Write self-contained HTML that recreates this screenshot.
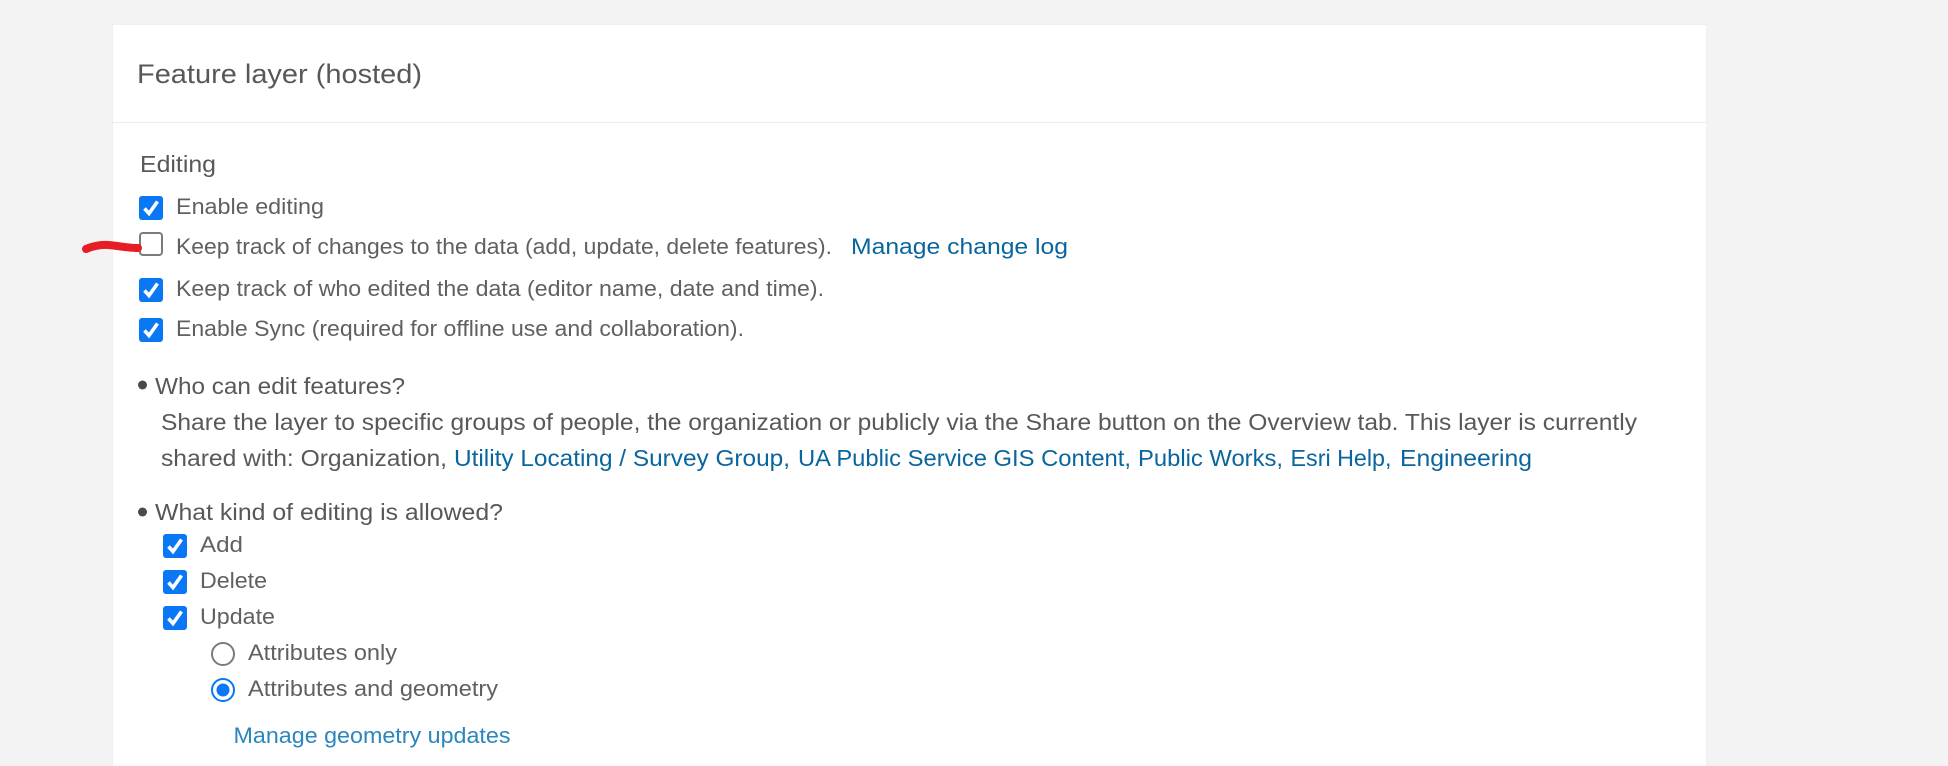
<!DOCTYPE html>
<html><head><meta charset="utf-8"><style>
html,body{margin:0;padding:0;width:1948px;height:766px;overflow:hidden;background:#f3f3f3}
svg{display:block}
text{font-family:"Liberation Sans",sans-serif;fill:#606060;font-size:22px}
.t{fill:#585858}
.l{fill:#0a659e}
.m{fill:#2a86bc}
</style></head><body>
<svg width="1948" height="766" viewBox="0 0 1948 766" xmlns="http://www.w3.org/2000/svg">
<defs>
<g id="cb"><rect width="24" height="24" rx="3" fill="#0a78f5"/><path d="M5.500 12.500l4.500 5L18.500 5.500" fill="none" stroke="#fff" stroke-width="3.600"/></g>
</defs>
<rect x="0" y="0" width="1948" height="766" fill="#f3f3f3"/>
<rect x="112.500" y="24.500" width="1594" height="742" fill="#fff" stroke="#efefef"/>
<rect x="113" y="122" width="1594" height="1" fill="#ececec"/>

<text x="137" y="83" style="font-size:27px" textLength="285" lengthAdjust="spacingAndGlyphs" class="t">Feature layer (hosted)</text>
<text x="140" y="172" style="font-size:23px" textLength="76" lengthAdjust="spacingAndGlyphs" class="t">Editing</text>

<use href="#cb" x="139" y="196"/>
<text x="176" y="214" textLength="148" lengthAdjust="spacingAndGlyphs">Enable editing</text>

<rect x="140" y="233" width="22" height="22" rx="3" fill="#fff" stroke="#7b7b7b" stroke-width="2"/>
<text x="176" y="254" textLength="656" lengthAdjust="spacingAndGlyphs">Keep track of changes to the data (add, update, delete features).</text>
<text x="851" y="254" textLength="217" lengthAdjust="spacingAndGlyphs" class="l">Manage change log</text>
<path d="M86 249C92 246.500 100 244.500 108 245C116 245.500 128 248 138 248" fill="none" stroke="#e81c24" stroke-width="8" stroke-linecap="round"/>

<use href="#cb" x="139" y="278"/>
<text x="176" y="296" textLength="648" lengthAdjust="spacingAndGlyphs">Keep track of who edited the data (editor name, date and time).</text>

<use href="#cb" x="139" y="318"/>
<text x="176" y="336" textLength="568" lengthAdjust="spacingAndGlyphs">Enable Sync (required for offline use and collaboration).</text>

<circle cx="142.500" cy="385" r="4.500" fill="#4a4a4a"/>
<text x="155" y="394" style="font-size:23px" textLength="250" lengthAdjust="spacingAndGlyphs" class="t">Who can edit features?</text>
<text x="161" y="430" style="font-size:23px" textLength="1476" lengthAdjust="spacingAndGlyphs" class="t">Share the layer to specific groups of people, the organization or publicly via the Share button on the Overview tab. This layer is currently</text>
<text x="161" y="466" style="font-size:23px" textLength="286" lengthAdjust="spacingAndGlyphs" class="t">shared with: Organization,</text>
<text x="454" y="466" style="font-size:23px" textLength="336" lengthAdjust="spacingAndGlyphs" class="l">Utility Locating / Survey Group,</text>
<text x="798" y="466" style="font-size:23px" textLength="333" lengthAdjust="spacingAndGlyphs" class="l">UA Public Service GIS Content,</text>
<text x="1138" y="466" style="font-size:23px" textLength="145" lengthAdjust="spacingAndGlyphs" class="l">Public Works,</text>
<text x="1290.500" y="466" style="font-size:23px" textLength="101" lengthAdjust="spacingAndGlyphs" class="l">Esri Help,</text>
<text x="1400" y="466" style="font-size:23px" textLength="132" lengthAdjust="spacingAndGlyphs" class="l">Engineering</text>

<circle cx="142.500" cy="512" r="4.500" fill="#4a4a4a"/>
<text x="155" y="520" style="font-size:23px" textLength="348" lengthAdjust="spacingAndGlyphs" class="t">What kind of editing is allowed?</text>

<use href="#cb" x="163" y="534"/>
<text x="200" y="552" textLength="43" lengthAdjust="spacingAndGlyphs">Add</text>
<use href="#cb" x="163" y="570"/>
<text x="200" y="588" textLength="67" lengthAdjust="spacingAndGlyphs">Delete</text>
<use href="#cb" x="163" y="606"/>
<text x="200" y="624" textLength="75" lengthAdjust="spacingAndGlyphs">Update</text>

<circle cx="223" cy="654" r="11" fill="#fff" stroke="#7b7b7b" stroke-width="2"/>
<text x="248" y="660" textLength="149" lengthAdjust="spacingAndGlyphs">Attributes only</text>
<circle cx="223" cy="690" r="11" fill="#fff" stroke="#0a78f5" stroke-width="2"/>
<circle cx="223" cy="690" r="6.500" fill="#0a78f5"/>
<text x="248" y="696" textLength="250" lengthAdjust="spacingAndGlyphs">Attributes and geometry</text>

<text x="233.500" y="743" textLength="277" lengthAdjust="spacingAndGlyphs" class="m">Manage geometry updates</text>
</svg>
</body></html>
